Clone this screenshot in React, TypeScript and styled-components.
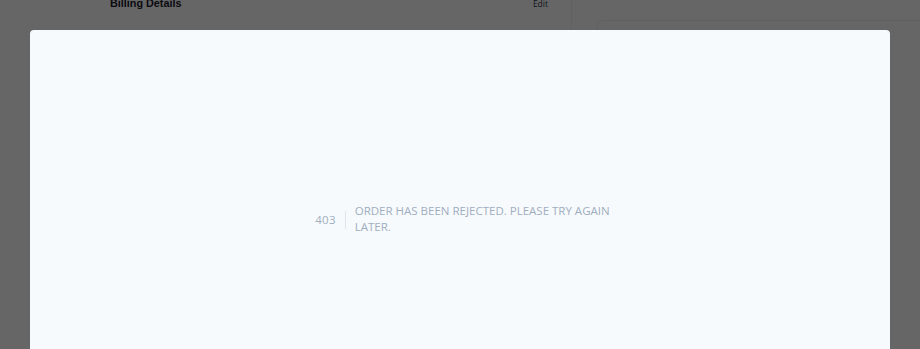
import styled, { createGlobalStyle } from "styled-components";

const GlobalStyle = createGlobalStyle`
  html, body {
    margin: 0;
    padding: 0;
    background: #ffffff;
    overflow: hidden;
  }
  body {
    font-family: "Open Sans", "Noto Sans", sans-serif;
  }
`;

const Page = styled.div`
  display: grid;
  grid-template-columns: 462px 1fr;
  column-gap: 25px;
  padding: 0 0 0 110px;
  height: 349px;
`;

const BillingColumn = styled.div`
  display: flex;
  align-items: flex-start;
  justify-content: space-between;
  border-right: 1px solid #f1f3f6;
  padding-right: 23px;
  margin-top: -3px;
`;

const SectionTitle = styled.h3`
  margin: 0;
  font-family: "Liberation Sans", Arial, sans-serif;
  font-size: 10.8px;
  font-weight: 700;
  color: #1a202c;
  line-height: 13px;
`;

const EditLink = styled.a`
  font-size: 8.5px;
  color: #2d3748;
  line-height: 13px;
`;

const SideCard = styled.div`
  margin-top: 20px;
  border-top: 1px solid #eef1f5;
  border-left: 1px solid #eef1f5;
  border-top-left-radius: 6px;
`;

const Overlay = styled.div`
  position: fixed;
  inset: 0;
  background: rgba(0, 0, 0, 0.6);
  padding: 30px 30px 0 30px;
`;

const Modal = styled.div`
  background: #f7fafc;
  border-radius: 4px;
  height: 378px;
  display: flex;
  align-items: center;
  justify-content: center;
`;

const ErrorRow = styled.div`
  display: flex;
  align-items: flex-start;
  margin-left: 12px;
`;

const Code = styled.div`
  font-size: 11.5px;
  line-height: 16px;
  color: #a0aec0;
  letter-spacing: 0.02em;
  padding: 1px 9px 1px 0;
  border-right: 1px solid #dfe5ec;
  margin-top: 8px;
`;

const Message = styled.div`
  font-size: 11.5px;
  line-height: 16px;
  color: #a0aec0;
  text-transform: uppercase;
  margin-left: 9px;
  max-width: 262px;
`;

export default function App() {
  return (
    <>
      <GlobalStyle />
      <Page>
        <BillingColumn>
          <SectionTitle>Billing Details</SectionTitle>
          <EditLink>Edit</EditLink>
        </BillingColumn>
        <SideCard />
      </Page>
      <Overlay>
        <Modal>
          <ErrorRow>
            <Code>403</Code>
            <Message>Order has been rejected. Please try again later.</Message>
          </ErrorRow>
        </Modal>
      </Overlay>
    </>
  );
}
